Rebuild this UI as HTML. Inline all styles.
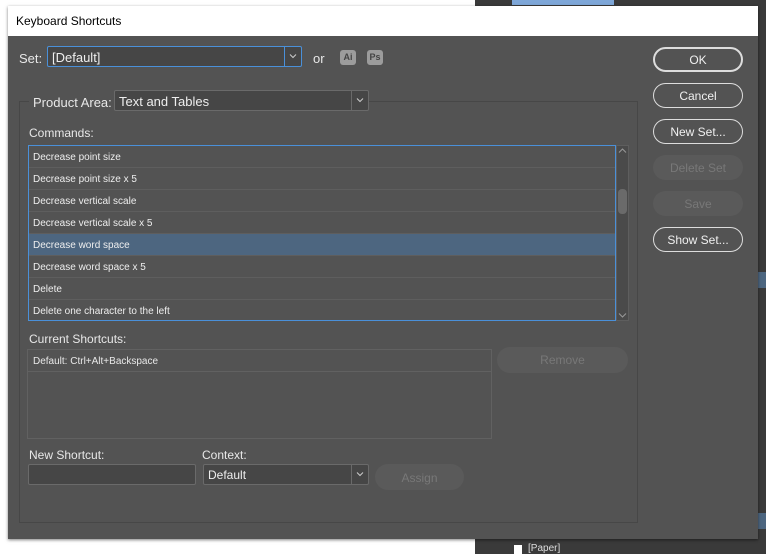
<!DOCTYPE html>
<html><head><style>
*{margin:0;padding:0;box-sizing:border-box}
body{width:766px;height:554px;position:relative;overflow:hidden;background:#fff;font-family:"Liberation Sans",sans-serif;color:#e8e8e8}
.a{position:absolute}
.t{font-size:12px;white-space:nowrap}
.sel{position:absolute;background:#464646;border:1px solid #6a6a6a;border-radius:2px;font-size:13px;padding:2px 4px;color:#eee}
.sel .ar{position:absolute;right:0;top:0;bottom:0;width:17px;border-left:1px solid #6a6a6a}
.sel .ar svg{position:absolute;left:4px;top:6px}
.btn{position:absolute;left:653px;width:90px;height:25px;border:1px solid #ddd;border-radius:13px;text-align:center;font-size:12px;line-height:24px;color:#f0f0f0}
.dis{border:none;background:#5a5a5a;color:#787878;line-height:26px}
.row{position:absolute;left:0;width:586px;height:22px;border-bottom:1px solid #5e5e5e;font-size:10px;line-height:23px;padding-left:4px;color:#eee}
</style></head><body>
<div class="a" style="left:475px;top:0;width:291px;height:554px;background:#3a3a3a"></div>
<div class="a" style="left:512px;top:0;width:102px;height:5px;background:#7ea7d8"></div>
<div class="a" style="left:757px;top:272px;width:9px;height:16px;background:#4d6680"></div>
<div class="a" style="left:757px;top:513px;width:9px;height:16px;background:#4d6680"></div>
<div class="a" style="left:514px;top:545px;width:8px;height:9px;background:#fff"></div>
<div class="a t" style="left:528px;top:543px;font-size:10px;color:#ddd">[Paper]</div>
<div class="a" style="left:8px;top:6px;width:750px;height:533px;background:#535353;box-shadow:0 1px 3px rgba(0,0,0,.5)"></div>
<div class="a" style="left:8px;top:6px;width:750px;height:30px;background:#fff"></div>
<div class="a t" style="left:16px;top:14px;color:#000">Keyboard Shortcuts</div>

<div class="a t" style="left:19px;top:51px;font-size:13px">Set:</div>
<div class="sel" style="left:47px;top:46px;width:255px;height:21px;border-color:#4a90d9;padding-top:3px">[Default]<div class="ar" style="border-color:#4a90d9"><svg width="8" height="6"><path d="M1 1.5L4 4.5L7 1.5" stroke="#ccc" fill="none"/></svg></div></div>
<div class="a t" style="left:313px;top:51px;font-size:13px">or</div>
<div class="a" style="left:340px;top:50px;width:16px;height:15px;background:#9c9c9c;border-radius:3px;color:#444;font-size:9px;font-weight:bold;text-align:center;line-height:15px">Ai</div>
<div class="a" style="left:367px;top:50px;width:16px;height:15px;background:#9c9c9c;border-radius:3px;color:#444;font-size:9px;font-weight:bold;text-align:center;line-height:15px">Ps</div>

<div class="a" style="left:19px;top:101px;width:619px;height:422px;border:1px solid #474747"></div>
<div class="a t" style="left:29px;top:95px;font-size:13px;background:#535353;padding:0 4px">Product Area:</div>
<div class="sel" style="left:114px;top:90px;width:255px;height:21px;padding-top:3px">Text and Tables<div class="ar"><svg width="8" height="6"><path d="M1 1.5L4 4.5L7 1.5" stroke="#ccc" fill="none"/></svg></div></div>

<div class="a t" style="left:29px;top:126px">Commands:</div>
<div class="a" style="left:28px;top:145px;width:588px;height:176px;border:1px solid #4a90d9;background:#535353;overflow:hidden">
<div class="row" style="top:0">Decrease point size</div>
<div class="row" style="top:22px">Decrease point size x 5</div>
<div class="row" style="top:44px">Decrease vertical scale</div>
<div class="row" style="top:66px">Decrease vertical scale x 5</div>
<div class="row" style="top:88px;background:#4d6680">Decrease word space</div>
<div class="row" style="top:110px">Decrease word space x 5</div>
<div class="row" style="top:132px">Delete</div>
<div class="row" style="top:154px;border:none">Delete one character to the left</div>
</div>
<div class="a" style="left:616px;top:145px;width:13px;height:176px;background:#4a4a4a;border:1px solid #5e5e5e"></div>
<div class="a" style="left:618px;top:189px;width:9px;height:25px;background:#6a6a6a;border-radius:4px"></div>
<svg class="a" style="left:618px;top:148px" width="9" height="6"><path d="M1 4.5L4.5 1L8 4.5" stroke="#999" fill="none"/></svg>
<svg class="a" style="left:618px;top:312px" width="9" height="6"><path d="M1 1.5L4.5 5L8 1.5" stroke="#999" fill="none"/></svg>

<div class="a t" style="left:29px;top:332px">Current Shortcuts:</div>
<div class="a" style="left:27px;top:349px;width:465px;height:90px;border:1px solid #616161"></div>
<div class="a" style="left:28px;top:371px;width:463px;height:1px;background:#616161"></div>
<div class="a t" style="left:33px;top:356px;font-size:10px">Default: Ctrl+Alt+Backspace</div>
<div class="a" style="left:497px;top:347px;width:131px;height:26px;background:#5a5a5a;border-radius:13px;color:#787878;font-size:12px;text-align:center;line-height:27px">Remove</div>

<div class="a t" style="left:29px;top:448px">New Shortcut:</div>
<div class="a" style="left:28px;top:464px;width:168px;height:21px;background:#464646;border:1px solid #6a6a6a;border-radius:2px"></div>
<div class="a t" style="left:202px;top:448px">Context:</div>
<div class="sel" style="left:203px;top:464px;width:166px;height:21px;font-size:12px;padding-top:3px">Default<div class="ar"><svg width="8" height="6"><path d="M1 1.5L4 4.5L7 1.5" stroke="#ccc" fill="none"/></svg></div></div>
<div class="a" style="left:375px;top:464px;width:89px;height:26px;background:#5a5a5a;border-radius:13px;color:#787878;font-size:12px;text-align:center;line-height:28px">Assign</div>

<div class="btn" style="top:47px;border-width:2px;line-height:22px">OK</div>
<div class="btn" style="top:83px">Cancel</div>
<div class="btn" style="top:119px">New Set...</div>
<div class="btn dis" style="top:155px">Delete Set</div>
<div class="btn dis" style="top:191px">Save</div>
<div class="btn" style="top:227px">Show Set...</div>
</body></html>
